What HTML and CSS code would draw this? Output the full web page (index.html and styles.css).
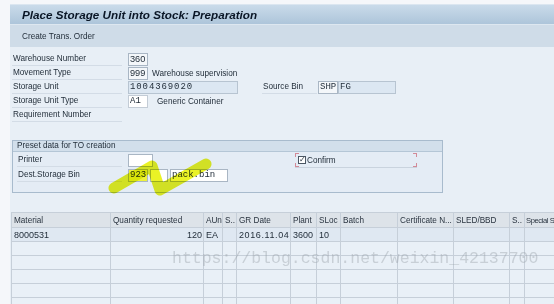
FILE: index.html
```html
<!DOCTYPE html>
<html lang="en">
<head>
    <meta charset="UTF-8">
    <title>Place Storage Unit into Stock: Preparation</title>
    <link rel="stylesheet" href="styles.css">
</head>
<body>
    <div class="screen">
        <!-- Title -->
        <div class="titlebar">
            <h1>Place Storage Unit into Stock: Preparation</h1>
        </div>

        <!-- Application toolbar -->
        <div class="toolbar">
            <span>Create Trans. Order</span>
        </div>

        <!-- Main screen -->
        <div class="main">
            <div class="form">
                <div class="row">
                    <span class="label">Warehouse Number</span>
                    <span class="field sans w20">360</span>
                </div>
                <div class="row">
                    <span class="label">Movement Type</span>
                    <span class="field sans w20">999</span>
                    <span class="text">Warehouse supervision</span>
                </div>
                <div class="row">
                    <span class="label">Storage Unit</span>
                    <span class="field display w110 spaced">1004369020</span>
                    <span class="label source">Source Bin</span>
                    <span class="field w20">SHP</span>
                    <span class="field display w58">FG</span>
                </div>
                <div class="row">
                    <span class="label">Storage Unit Type</span>
                    <span class="field w20 plain">A1</span>
                    <span class="text gen">Generic Container</span>
                </div>
                <div class="row">
                    <span class="label">Requirement Number</span>
                </div>
            </div>

            <!-- Preset data group -->
            <div class="group">
                <div class="group-head">Preset data for TO creation</div>
                <div class="group-row">
                    <span class="label">Printer</span>
                    <span class="field white w25"></span>
                    <div class="confirm">
                        <span class="check">&#10003;</span>
                        <span>Confirm</span>
                        <i class="corner tl"></i><i class="corner tr"></i>
                        <i class="corner bl"></i><i class="corner br"></i>
                    </div>
                </div>
                <div class="group-row">
                    <span class="label">Dest.Storage Bin</span>
                    <span class="field yellow w20">923</span>
                    <span class="field white w18 gap2"></span>
                    <span class="field white w58 gap2">pack.bin</span>
                </div>
            </div>

            <!-- Items table -->
            <table class="grid">
                <colgroup>
                    <col style="width:99px"><col style="width:93px"><col style="width:19px">
                    <col style="width:14px"><col style="width:54px"><col style="width:26px">
                    <col style="width:24px"><col style="width:57px"><col style="width:56px">
                    <col style="width:56px"><col style="width:15px"><col style="width:30px">
                </colgroup>
                <thead>
                    <tr>
                        <th>Material</th><th>Quantity requested</th><th class="r">AUn</th>
                        <th>S..</th><th>GR Date</th><th>Plant</th><th>SLoc</th><th>Batch</th>
                        <th>Certificate N...</th><th>SLED/BBD</th><th>S..</th><th class="last">Special S</th>
                    </tr>
                </thead>
                <tbody>
                    <tr class="filled">
                        <td>8000531</td><td class="r">120</td><td>EA</td><td></td>
                        <td class="date">2016.11.04</td><td>3600</td><td>10</td><td></td>
                        <td></td><td></td><td></td><td></td>
                    </tr>
                    <tr><td></td><td></td><td></td><td></td><td></td><td></td><td></td><td></td><td></td><td></td><td></td><td></td></tr>
                    <tr><td></td><td></td><td></td><td></td><td></td><td></td><td></td><td></td><td></td><td></td><td></td><td></td></tr>
                    <tr><td></td><td></td><td></td><td></td><td></td><td></td><td></td><td></td><td></td><td></td><td></td><td></td></tr>
                    <tr><td></td><td></td><td></td><td></td><td></td><td></td><td></td><td></td><td></td><td></td><td></td><td></td></tr>
                    <tr><td></td><td></td><td></td><td></td><td></td><td></td><td></td><td></td><td></td><td></td><td></td><td></td></tr>
                </tbody>
            </table>
        </div>
    </div>

    <!-- Highlighter strokes over the destination bin -->
    <svg class="marker" width="554" height="304" viewBox="0 0 554 304">
        <polyline points="114,188 152,166 160,190 206,164" fill="none" stroke="#e6f000"
                  stroke-width="11" stroke-linecap="round" stroke-linejoin="round" opacity="0.85"/>
    </svg>

    <div class="watermark">https://blog.csdn.net/weixin_42137700</div>
</body>
</html>
```

FILE: styles.css
```css
/* Reset */
* {
    margin: 0;
    padding: 0;
    box-sizing: border-box;
}

body {
    width: 554px;
    height: 304px;
    overflow: hidden;
    position: relative;
    background-color: #f5f7fa;
    font-family: "Liberation Sans", Arial, sans-serif;
    font-size: 8.2px;
    color: #1e2a36;
}

.screen {
    margin-left: 10px;
    padding-top: 4px;
}

/* Title bar */
.titlebar {
    height: 20px;
    background: linear-gradient(#cadbea, #adc5da);
    border-top: 1px solid #dbe6f0;
    display: flex;
    align-items: center;
    padding-left: 12px;
}

.titlebar h1 {
    font-size: 11.7px;
    font-weight: bold;
    font-style: italic;
    color: #0a1626;
}

/* Toolbar */
.toolbar {
    height: 23px;
    background-color: #cfdce8;
    border-top: 1px solid #dde7f0;
    display: flex;
    align-items: center;
    padding-left: 12px;
}

/* Main area */
.main {
    background-color: #e8eff6;
    padding-top: 5px;
    height: 257px;
}

.form {
    padding-left: 2px;
}

.row {
    display: flex;
    align-items: center;
    height: 14px;
}

.label {
    width: 110px;
    height: 13px;
    line-height: 12px;
    padding-left: 1px;
    border-bottom: 1px solid #d3dce6;
    margin-right: 6px;
    flex-shrink: 0;
}

.label.source {
    width: 55px;
    margin-left: 24px;
    margin-right: 1px;
}

.field {
    height: 13px;
    line-height: 11px;
    border: 1px solid #a9b6c4;
    background-color: #f4f7fa;
    font-family: "Liberation Mono", "Courier New", monospace;
    font-size: 9px;
    padding-left: 1px;
    flex-shrink: 0;
}

.field.sans {
    font-family: "Liberation Sans", Arial, sans-serif;
    font-size: 9.2px;
}

.field.display {
    background-color: #dce7f2;
    border-color: #b7c4d1;
}

.field.white {
    background-color: #ffffff;
}

.field.plain {
    background-color: #ffffff;
    border-color: #c3ccd6;
}

.field.yellow {
    background-color: #eef23a;
}

.field.spaced {
    letter-spacing: 0.9px;
}

.w18 { width: 18px; }
.w20 { width: 20px; }
.w25 { width: 25px; }
.w58 { width: 58px; }
.w110 { width: 110px; }

.gap2 {
    margin-left: 2px;
}

.text {
    margin-left: 4px;
}

.text.gen {
    margin-left: 9px;
}

/* Group box */
.group {
    margin: 18px 0 0 2px;
    width: 431px;
    height: 53px;
    border: 1px solid #a8bbcd;
    background-color: #e4ecf5;
}

.group-head {
    height: 11px;
    line-height: 10px;
    padding-left: 4px;
    background-color: #d2dfeb;
    border-bottom: 1px solid #b4c6d6;
}

.group-row {
    display: flex;
    align-items: center;
    height: 15px;
    padding-left: 4px;
}

.group-row:nth-child(2) {
    margin-top: 1px;
}

.group-row .label {
    width: 105px;
}

.confirm {
    position: relative;
    margin-left: 142px;
    width: 122px;
    height: 15px;
    display: flex;
    align-items: center;
    padding-left: 3px;
    border-bottom: 1px solid #c9d3de;
}

.check {
    width: 8px;
    height: 8px;
    border: 1px solid #4a5663;
    background-color: #ffffff;
    font-size: 8px;
    line-height: 6px;
    text-align: center;
    margin-right: 1px;
}

.corner {
    position: absolute;
    width: 4px;
    height: 4px;
    border-color: #d28a98;
    border-style: solid;
    border-width: 0;
}

.corner.tl { left: 0; top: 0; border-left-width: 1px; border-top-width: 1px; }
.corner.tr { right: 0; top: 0; border-right-width: 1px; border-top-width: 1px; }
.corner.bl { left: 0; bottom: 0; border-left-width: 1px; border-bottom-width: 1px; }
.corner.br { right: 0; bottom: 0; border-right-width: 1px; border-bottom-width: 1px; }

/* Table */
.grid {
    margin: 19px 0 0 1px;
    border-collapse: collapse;
    table-layout: fixed;
    width: 543px;
    background-color: #e9f0f7;
}

.grid th,
.grid td {
    border: 1px solid #c6cfd9;
    height: 14px;
    padding: 0 1px 0 2px;
    white-space: nowrap;
    overflow: hidden;
    font-weight: normal;
    text-align: left;
}

.grid th {
    height: 15px;
    background-color: #dde3e9;
    color: #2a3440;
}

.grid th.last {
    padding-left: 1px;
    letter-spacing: -0.4px;
    font-size: 7.6px;
}

.grid .r {
    text-align: right;
}

.grid tr.filled td {
    background-color: #dfe8f2;
    font-size: 9px;
}

.grid td.date {
    letter-spacing: 0.6px;
}

/* Overlays */
.marker {
    position: absolute;
    left: 0;
    top: 0;
    pointer-events: none;
    mix-blend-mode: multiply;
}

.watermark {
    position: absolute;
    left: 172px;
    top: 249px;
    font-family: "Liberation Mono", "Courier New", monospace;
    font-size: 16.5px;
    color: rgba(150, 158, 166, 0.4);
    pointer-events: none;
}
```
